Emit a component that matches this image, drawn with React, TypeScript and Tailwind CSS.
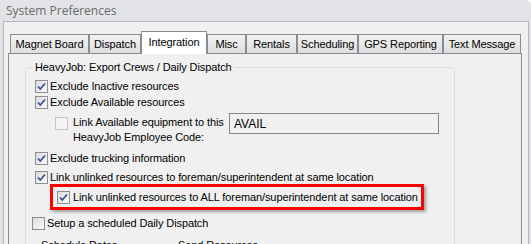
import React from "react"

const TABS = [
  { label: "Magnet Board", w: "w-[79px]" },
  { label: "Dispatch", w: "w-[52px]" },
  { label: "Integration", w: "w-[66px]", active: true },
  { label: "Misc", w: "w-[39px]" },
  { label: "Rentals", w: "w-[51px]" },
  { label: "Scheduling", w: "w-[61px]" },
  { label: "GPS Reporting", w: "w-[85px]" },
  { label: "Text Message", w: "w-[78px]" },
]

function Check({ checked, light }: { checked?: boolean; light?: boolean }) {
  return (
    <span
      className={`flex h-[13px] w-[13px] shrink-0 items-center justify-center border ${
        light ? "border-[#c6c6c6] bg-[#f4f4f4]" : "border-[#8e8f8f] bg-gradient-to-br from-[#dcdcdc] to-[#fbfbfb]"
      }`}
    >
      {checked && (
        <svg width="9" height="9" viewBox="0 0 9 9">
          <path d="M1 4.5 L3.3 7 L8 1.5" fill="none" stroke="#3b5193" strokeWidth="1.8" />
        </svg>
      )}
    </span>
  )
}

function Row({ label, checked, className = "" }: { label: string; checked?: boolean; className?: string }) {
  return (
    <div className={`flex h-[16px] items-center gap-[2px] ${className}`}>
      <Check checked={checked} />
      <span className="whitespace-nowrap">{label}</span>
    </div>
  )
}

export default function App() {
  return (
    <div
      className="h-[244px] w-[531px] overflow-hidden bg-white text-[11px] leading-[14px] tracking-[-0.1px] text-black"
      style={{ fontFamily: '"Liberation Sans", Arial, sans-serif' }}
    >
      <div className="h-full rounded-tr-[6px] bg-[#e1e3e6]">
        {/* title bar */}
        <div
          className="flex h-[21px] items-center px-[6px] text-[12px] tracking-normal text-[#6b6b6b]"
          style={{ fontFamily: '"Open Sans", "Noto Sans", sans-serif' }}
        >
          System Preferences
        </div>

        {/* window body */}
        <div className="ml-[3px] mr-[2px] h-[223px] border-l border-r border-t border-[#b5b9bf] bg-[#f0f0f0] pl-[4px] pr-[6px]">
          {/* tabs */}
          <div className="ml-[2px] mt-[9px] flex h-[22px] items-end">
            {TABS.map((t) =>
              t.active ? (
                <div
                  key={t.label}
                  className={`relative z-10 -mb-px flex h-[23px] items-start justify-center border border-b-0 border-[#898c95] bg-white pt-[3px] ${t.w}`}
                >
                  {t.label}
                </div>
              ) : (
                <div
                  key={t.label}
                  className={`flex h-[19px] items-center justify-center border border-b-0 border-[#898c95] bg-gradient-to-b from-[#f3f3f3] to-[#dedede] ${t.w}`}
                >
                  {t.label}
                </div>
              )
            )}
          </div>

          {/* panel */}
          <div className="h-[200px] w-[514px] border border-[#898c95] bg-[#f0f0f0] pl-[16px] pt-[13px]">
            <div className="h-[200px] w-[430px] rounded-[3px] border border-[#d5dfe5] pl-[9px]">
              <div className="-mt-[8px] ml-[-2px] h-[14px] w-fit bg-[#f0f0f0] px-[2px]">
                HeavyJob: Export Crews / Daily Dispatch
              </div>

              <Row label="Exclude Inactive resources" checked className="mt-[4px]" />
              <Row label="Exclude Available resources" checked />

              <div className="ml-[20px] mt-[3px] flex items-start">
                <div className="mt-[4px]">
                  <Check light />
                </div>
                <div className="ml-[5px] mt-[2px] w-[155px] leading-[15px]">
                  Link Available equipment to this
                  <br />
                  HeavyJob Employee Code:
                </div>
                <div className="ml-[1px] flex h-[21px] w-[210px] items-center border border-[#828790] px-[4px] text-[12px] tracking-normal">
                  AVAIL
                </div>
              </div>

              <Row label="Exclude trucking information" checked className="mt-[5px]" />
              <Row label="Link unlinked resources to foreman/superintendent at same location" checked className="mt-[3px]" />

              <div className="-mt-[1px] ml-[15px] flex h-[26px] w-[374px] items-center gap-[3px] border-[3px] border-[#ff0000] pl-[4px] shadow-[2px_2px_3px_rgba(0,0,0,0.35)]">
                <Check checked />
                <span className="whitespace-nowrap">
                  Link unlinked resources to ALL foreman/superintendent at same location
                </span>
              </div>

              <Row label="Setup a scheduled Daily Dispatch" className="-ml-[3px] mt-[5px]" />

              <div className="-ml-[2px] mt-[14px] flex gap-[3px]">
                <div className="h-[20px] w-[131px] rounded-[3px] border border-[#d5dfe5] pl-[5px]">
                  <div className="-mt-[8px] h-[14px] w-fit bg-[#f0f0f0] px-[2px]">Schedule Dates</div>
                </div>
                <div className="h-[20px] w-[283px] rounded-[3px] border border-[#d5dfe5] pl-[8px]">
                  <div className="-mt-[8px] h-[14px] w-fit bg-[#f0f0f0] px-[2px]">Send Resources</div>
                </div>
              </div>
            </div>
          </div>
        </div>
      </div>
    </div>
  )
}
